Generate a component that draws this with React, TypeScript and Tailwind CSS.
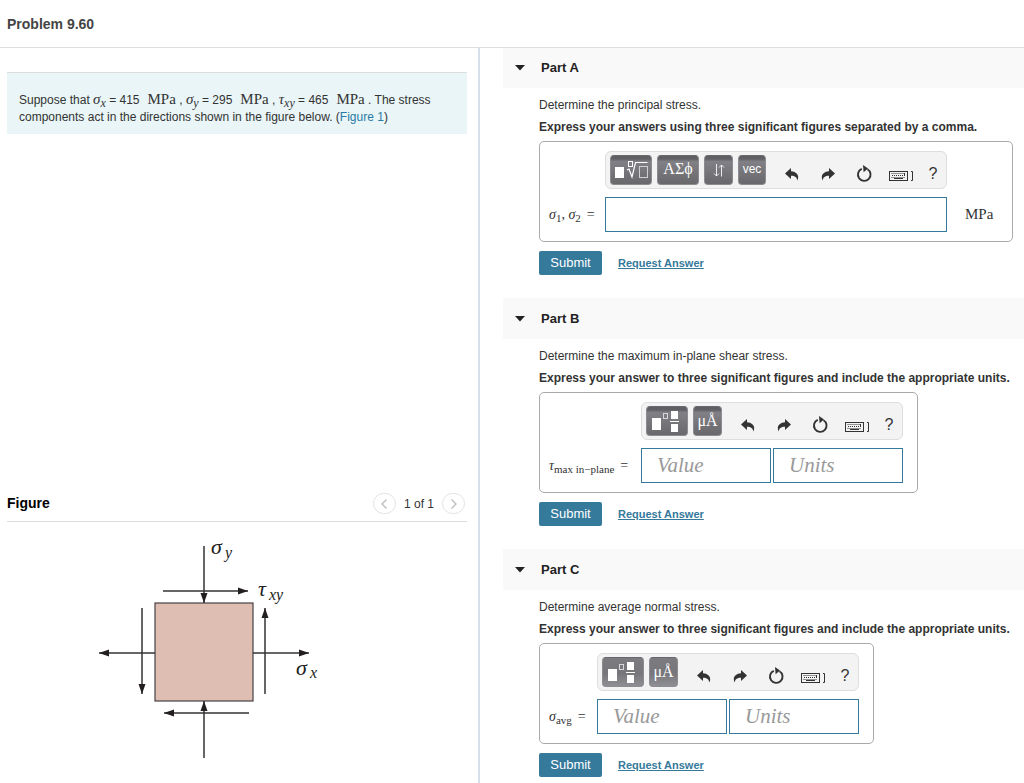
import React from 'react';

type AnswerPart = {
  id: string;
  title: string;
  question: string;
  instructions: string;
  symbol: React.ReactNode;
  kind: 'expression' | 'units';
  boxClass: string;
  labelClass: string;
  keyShade: string;
};

const darkKeys = 'from-[#606064] from-10% via-[#808086] via-20% to-[#69696c]';
const splitKeys = 'from-[#7c7c80] via-[#77777b] via-55% to-[#8e8e94]';

const parts: AnswerPart[] = [
  {
    id: 'a',
    title: 'Part A',
    question: 'Determine the principal stress.',
    instructions: 'Express your answers using three significant figures separated by a comma.',
    symbol: (
      <>
        <i>σ</i>
        <sub className="text-[11px]">1</sub>, <i>σ</i>
        <sub className="text-[11px]">2</sub>
      </>
    ),
    kind: 'expression',
    boxClass: 'flex pr-[22px]',
    labelClass: 'w-[56px]',
    keyShade: darkKeys,
  },
  {
    id: 'b',
    title: 'Part B',
    question: 'Determine the maximum in-plane shear stress.',
    instructions: 'Express your answer to three significant figures and include the appropriate units.',
    symbol: (
      <>
        <i>τ</i>
        <sub className="text-[11px]">max in−plane</sub>
      </>
    ),
    kind: 'units',
    boxClass: 'inline-flex pr-[14px]',
    labelClass: 'w-[92px]',
    keyShade: darkKeys,
  },
  {
    id: 'c',
    title: 'Part C',
    question: 'Determine average normal stress.',
    instructions: 'Express your answer to three significant figures and include the appropriate units.',
    symbol: (
      <>
        <i>σ</i>
        <sub className="text-[11px]">avg</sub>
      </>
    ),
    kind: 'units',
    boxClass: 'inline-flex pr-[14px]',
    labelClass: 'w-[48px]',
    keyShade: splitKeys,
  },
];

const keyClass =
  'flex h-[30px] items-center justify-center rounded border border-[#8b8b90] border-t-[#68686c] bg-linear-to-b text-white';

const RootIcon = () => (
  <svg width="34" height="20" viewBox="0 0 34 20" fill="none" stroke="white">
    <rect x="1" y="7" width="9" height="11" fill="white" stroke="none" />
    <rect x="14.5" y="1.5" width="4" height="5" />
    <path d="M13 10l2-1 3 8 3.500-14.500h12" strokeWidth="1.200" />
    <rect x="25.500" y="6.500" width="8" height="11" stroke="#d0d0d2" />
  </svg>
);

const FractionIcon = () => (
  <svg width="32" height="24" viewBox="0 0 32 24" fill="white">
    <rect x="1" y="9" width="9" height="12" />
    <rect x="12.500" y="4.500" width="4" height="5" fill="none" stroke="#d8d8da" />
    <rect x="20" y="2" width="7" height="8" />
    <rect x="19" y="12" width="9" height="1" />
    <rect x="20" y="15" width="7" height="8" />
  </svg>
);

const UndoIcon = () => (
  <svg width="14" height="13" viewBox="0 0 14 13" fill="#333">
    <path d="M0 5.500L6 0v3.200c4.500.2 7.200 2.800 7.200 6 0 1.200-.4 2.400-1 3.300-.1-3.300-2.200-4.800-6.200-4.800V11z" />
  </svg>
);

const ResetIcon = () => (
  <svg width="17" height="18" viewBox="0 0 17 18" fill="none">
    <path d="M11.500 4.200A6.300 6.300 0 1 1 5.800 3.800" stroke="#333" strokeWidth="1.900" />
    <path d="M7 0l5 3.400-4.400 3.800z" fill="#333" />
  </svg>
);

const KeyboardIcon = () => (
  <svg width="25" height="12" viewBox="0 0 25 12" fill="none" stroke="#333">
    <rect x=".5" y="1.500" width="18" height="9" />
    <path d="M2.500 3.500h14M3 5.500h13M2.500 7.500h14" strokeDasharray="1 1" />
    <path d="M5 8.500h9M15.500 3v3" />
    <path d="M22 1.500h1.500v9H22" />
  </svg>
);

const Toolbar = ({ kind, keyShade }: { kind: AnswerPart['kind']; keyShade: string }) => (
  <div className="flex h-[38px] items-center self-start rounded-md border border-[#ddd] bg-[#f3f3f3] pl-1 text-[#333]">
    <div className="mr-2 flex gap-[5px]">
      {kind === 'expression' ? (
        <>
          <button type="button" aria-label="Templates" className={`${keyClass} ${keyShade} w-[42px]`}>
            <RootIcon />
          </button>
          <button type="button" className={`${keyClass} ${keyShade} w-[42px] pb-0.5 text-base`}>
            ΑΣϕ
          </button>
          <button type="button" aria-label="Arrows" className={`${keyClass} ${keyShade} w-[29px]`}>
            <svg width="12" height="13" viewBox="0 0 12 13" fill="none" stroke="#eee">
              <path d="M3.500 0v12M1 9.500L3.500 12 6 9.500M8.500 12.500V1M6 3.500L8.500 1 11 3.500" />
            </svg>
          </button>
          <button
            type="button"
            className={`${keyClass} ${keyShade} w-[28px] pb-0.5 font-['Liberation_Sans',sans-serif] text-xs`}
          >
            vec
          </button>
        </>
      ) : (
        <>
          <button type="button" aria-label="Templates" className={`${keyClass} ${keyShade} w-[42px]`}>
            <FractionIcon />
          </button>
          <button type="button" className={`${keyClass} ${keyShade} w-[29px] text-base`}>
            μÅ
          </button>
        </>
      )}
    </div>
    <button type="button" aria-label="Undo" className="flex w-9 justify-center pt-2">
      <UndoIcon />
    </button>
    <button type="button" aria-label="Redo" className="flex w-9 -scale-x-100 justify-center pt-2">
      <UndoIcon />
    </button>
    <button type="button" aria-label="Reset" className="flex w-9 justify-center pt-2">
      <ResetIcon />
    </button>
    <button type="button" aria-label="Keyboard shortcuts" className="flex w-[38px] justify-center pt-3">
      <KeyboardIcon />
    </button>
    <button type="button" aria-label="Help" className="w-[26px] pt-2 font-['Liberation_Sans',sans-serif] text-base">
      ?
    </button>
  </div>
);

const inputClass =
  'h-[35px] border border-[#35799b] bg-white pl-[15px] text-[21px] text-[#333] placeholder:italic placeholder:text-[#999] focus:outline-none';

const Part = ({ part }: { part: AnswerPart }) => (
  <section>
    <h2 className="flex h-[41px] items-center bg-[#f9f9f9] text-[13px] font-bold text-[#222]">
      <button type="button" className="flex items-center gap-4 pl-3">
        <svg width="10" height="6" viewBox="0 0 10 6" fill="#222">
          <path d="M0 0h10L5 5.500z" />
        </svg>
        {part.title}
      </button>
    </h2>
    <div className="pt-[9px] pr-[11px] pl-9 text-xs">
      <p className="mb-1.5">{part.question}</p>
      <p className="mb-1.5 font-bold">{part.instructions}</p>
      <div
        className={`${part.boxClass} items-end rounded-[5px] border border-[#aaa] py-[9px] pl-[9px] align-top font-['Liberation_Serif',serif]`}
      >
        <label
          htmlFor={`answer-${part.id}`}
          className={`${part.labelClass} h-[35px] shrink-0 text-sm leading-[35px] whitespace-nowrap`}
        >
          {part.symbol}
          <span className="ml-1.5">=</span>
        </label>
        <div className={part.kind === 'expression' ? 'flex flex-1 flex-col gap-2' : 'flex flex-col gap-2'}>
          <Toolbar kind={part.kind} keyShade={part.keyShade} />
          {part.kind === 'expression' ? (
            <input id={`answer-${part.id}`} type="text" className={`${inputClass} w-full`} />
          ) : (
            <div className="flex gap-0.5">
              <input
                id={`answer-${part.id}`}
                type="text"
                placeholder="Value"
                className={`${inputClass} w-[130px]`}
              />
              <input
                type="text"
                aria-label="Units"
                placeholder="Units"
                className={`${inputClass} w-[130px]`}
              />
            </div>
          )}
        </div>
        {part.kind === 'expression' && (
          <span className="ml-[18px] text-[15px] leading-[35px]">MPa</span>
        )}
      </div>
      <div className="mt-[9px] flex items-center gap-4">
        <button type="button" className="h-6 w-[63px] rounded-xs bg-[#35799b] text-[13px] text-white">
          Submit
        </button>
        <a href="#" className="text-[11px] font-bold text-[#35799b] underline">
          Request Answer
        </a>
      </div>
    </div>
  </section>
);

const Quantity = ({ symbol, sub, value }: { symbol: string; sub: string; value: number }) => (
  <>
    <span className="font-['Liberation_Serif',serif] text-[15px] italic">
      {symbol}
      <sub className="text-xs">{sub}</sub>
    </span>{' '}
    = {value}
    <span className="ml-2 font-['Liberation_Serif',serif] text-[15px]">MPa</span>
  </>
);

// each arrow is [x1, y1, x2, y2], with its head at the second point
const arrows = [
  [114, 11, 114, 68],
  [114, 223, 114, 166],
  [65, 118, 9, 118],
  [163, 118, 219, 118],
  [73, 56, 158, 56],
  [159, 178, 74, 178],
  [52, 73, 52, 159],
  [175, 159, 175, 73],
];

const StressFigure = () => (
  <svg
    width="240"
    height="230"
    viewBox="0 0 240 230"
    role="img"
    aria-label="Stress element"
    className="ml-[83px] overflow-visible font-['Liberation_Serif',serif] italic"
  >
    <defs>
      <marker
        id="head"
        viewBox="0 0 10 8"
        refX="10"
        refY="4"
        markerWidth="10"
        markerHeight="8"
        markerUnits="userSpaceOnUse"
        orient="auto"
      >
        <path d="M0 .5L10 4 0 7.500z" fill="#231f20" />
      </marker>
    </defs>
    <rect x="65" y="68" width="98" height="98" fill="#debdb3" stroke="#444" strokeWidth="1.200" />
    {arrows.map(([x1, y1, x2, y2], index) => (
      <line
        key={index}
        x1={x1}
        y1={y1}
        x2={x2}
        y2={y2}
        stroke="#333"
        strokeWidth="1.500"
        markerEnd="url(#head)"
      />
    ))}
    <g fill="#222" fontSize="22">
      <text x="121" y="19">σ</text>
      <text x="168" y="61">τ</text>
      <text x="206" y="140">σ</text>
    </g>
    <g fill="#222" fontSize="16">
      <text x="135" y="23">y</text>
      <text x="179" y="65">xy</text>
      <text x="220" y="143">x</text>
    </g>
  </svg>
);

const App: React.FC = () => {
  return (
    <div className="flex min-h-screen flex-col bg-white font-['Liberation_Sans',Arial,sans-serif] text-[#333]">
      <header className="relative z-10 flex h-12 shrink-0 items-center border-b border-[#ddd] pl-[7px]">
        <h1 className="text-sm font-bold text-[#444]">Problem 9.60</h1>
      </header>
      <main className="-mt-px flex flex-1">
        <div className="flex w-15/32 shrink-0 flex-col border-r-2 border-[#d5e0ea] pr-[11px] pl-[7px]">
          <div className="flex-1 pt-[25px]">
            <p className="border-t border-[#ddd] bg-[#e9f5f7] pt-[18px] pr-5 pb-2 pl-3 text-xs leading-[17px]">
              Suppose that <Quantity symbol="σ" sub="x" value={415} /> ,{' '}
              <Quantity symbol="σ" sub="y" value={295} /> ,{' '}
              <Quantity symbol="τ" sub="xy" value={465} /> . The stress components act in the
              directions shown in the figure below. (
              <a href="#figure" className="text-[#2a7ba5]">
                Figure 1
              </a>
              )
            </p>
          </div>
          <div id="figure" className="pb-[18px]">
            <div className="mb-[13px] flex items-start justify-between border-b border-[#ddd] pb-[7px]">
              <h2 className="text-sm font-bold text-black">Figure</h2>
              <div className="flex items-center gap-2 pr-0.5 text-xs">
                <button
                  type="button"
                  aria-label="Previous figure"
                  className="flex h-[21px] w-[23px] items-center justify-center rounded-full border border-[#e2e2e2]"
                >
                  <svg width="6" height="10" viewBox="0 0 6 10" fill="none" stroke="#bbb" strokeWidth="1.300">
                    <path d="M5.500.5L1 5l4.500 4.500" />
                  </svg>
                </button>
                1 of 1
                <button
                  type="button"
                  aria-label="Next figure"
                  className="flex h-[21px] w-[23px] items-center justify-center rounded-full border border-[#e2e2e2]"
                >
                  <svg width="6" height="10" viewBox="0 0 6 10" fill="none" stroke="#bbb" strokeWidth="1.300">
                    <path d="M.5.5L5 5 .5 9.500" />
                  </svg>
                </button>
              </div>
            </div>
            <StressFigure />
          </div>
        </div>
        <div className="flex min-w-0 flex-1 flex-col gap-[23px] pl-[23px]">
          {parts.map((part) => (
            <Part key={part.id} part={part} />
          ))}
        </div>
      </main>
    </div>
  );
};

export default App;
